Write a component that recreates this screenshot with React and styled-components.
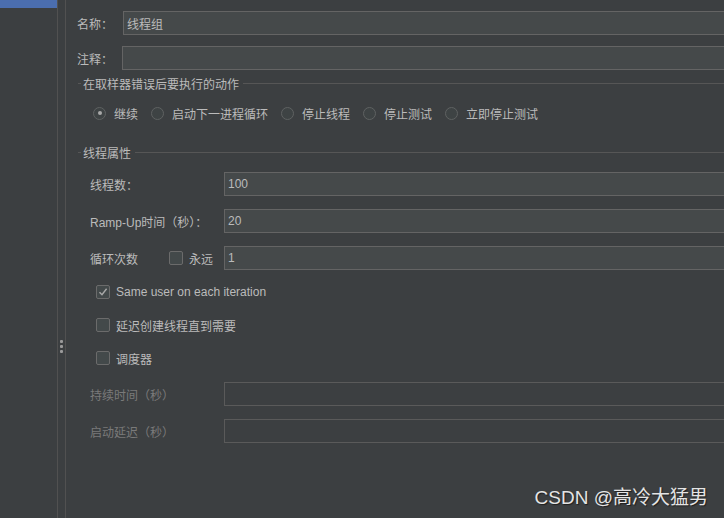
import React from "react";
import styled, { createGlobalStyle } from "styled-components";

const GlobalStyle = createGlobalStyle`
  html, body {
    margin: 0;
    padding: 0;
    background: #3c3f41;
  }
  body {
    font-family: "Liberation Sans", "Noto Sans CJK SC", sans-serif;
    font-size: 12px;
    color: #bbbbbb;
  }
`;

const Frame = styled.div`
  position: relative;
  display: flex;
  width: 724px;
  height: 518px;
  overflow: hidden;
  background: #3c3f41;
`;

const TreePane = styled.div`
  width: 57px;
  flex-shrink: 0;
  border-right: 1px solid #515151;
`;

const SelectedNode = styled.div`
  height: 8px;
  background: #4b6eaf;
`;

const Splitter = styled.div`
  width: 8px;
  flex-shrink: 0;
  border-right: 1px solid #515151;
  display: flex;
  flex-direction: column;
  align-items: center;
  justify-content: center;
  gap: 2px;
  padding-top: 174px;
  box-sizing: border-box;
`;

const Dot = styled.span`
  width: 3px;
  height: 3px;
  border-radius: 1px;
  background: #9a9a9a;
`;

const Content = styled.div`
  flex: 1;
  min-width: 0;
  padding: 11px 0 0 11px;
  display: flex;
  flex-direction: column;
`;

const Row = styled.div`
  display: flex;
  align-items: center;
  height: 24px;
  margin-top: ${(p) => p.$top || 0}px;
  padding-left: ${(p) => p.$indent || 0}px;
`;

const Label = styled.span`
  width: ${(p) => p.$w}px;
  flex-shrink: 0;
  white-space: nowrap;
  color: ${(p) => (p.$disabled ? "#7a7a7a" : "#bbbbbb")};
`;

const Field = styled.div`
  flex: 1;
  height: 24px;
  box-sizing: border-box;
  margin-right: -6px;
  border: 1px solid ${(p) => (p.$disabled ? "#5a5a5a" : "#646464")};
  background: ${(p) => (p.$disabled ? "transparent" : "#45494a")};
  color: #bbbbbb;
  padding-left: 3px;
  display: flex;
  align-items: center;
`;

const Group = styled.div`
  margin-left: 1px;
  margin-top: ${(p) => p.$top}px;
  display: flex;
  flex-direction: column;
`;

const GroupTitle = styled.div`
  display: flex;
  align-items: center;
  height: 14px;
  &::before {
    content: "";
    width: 3px;
    height: 1px;
    background: #565656;
    margin-right: 2px;
  }
  &::after {
    content: "";
    flex: 1;
    height: 1px;
    background: #565656;
    margin-left: 4px;
  }
`;

const RadioRow = styled.div`
  display: flex;
  align-items: center;
  gap: 13px;
  margin-top: 16px;
  padding-left: 15px;
  height: 14px;
`;

const RadioItem = styled.label`
  display: flex;
  align-items: center;
  gap: 8px;
  white-space: nowrap;
`;

const RadioCircle = styled.span`
  width: 13px;
  height: 13px;
  box-sizing: border-box;
  border-radius: 50%;
  border: 1px solid #5f6262;
  background: #3e4344;
  display: flex;
  align-items: center;
  justify-content: center;
  &::after {
    content: "";
    width: 4px;
    height: 4px;
    border-radius: 50%;
    background: ${(p) => (p.$on ? "#a9a9a9" : "transparent")};
  }
`;

const CheckRow = styled.label`
  display: flex;
  align-items: center;
  gap: 6px;
  height: 14px;
  margin-top: ${(p) => p.$top}px;
  padding-left: 18px;
  white-space: nowrap;
`;

const Box = styled.span`
  width: 14px;
  height: 14px;
  flex-shrink: 0;
  box-sizing: border-box;
  border: 1px solid #6b6b6b;
  border-radius: 2px;
  background: #43494a;
  display: flex;
  align-items: center;
  justify-content: center;
`;

const InlineCheck = styled.label`
  display: flex;
  align-items: center;
  gap: 6px;
  width: 55px;
  flex-shrink: 0;
`;

const Watermark = styled.div`
  position: absolute;
  right: 16px;
  bottom: 9px;
  font-family: "Liberation Sans", "Noto Sans CJK SC", sans-serif;
  font-size: 19px;
  color: #e4e4e4;
  text-shadow: 1px 1px 1px #1e1e1e;
`;

const Check = ({ on }) => (
  <Box>
    {on && (
      <svg width="10" height="10" viewBox="0 0 10 10">
        <path d="M1.5 5.2 L4 7.8 L8.6 1.8" fill="none" stroke="#a9a9a9" strokeWidth="1.4" />
      </svg>
    )}
  </Box>
);

const actions = ["继续", "启动下一进程循环", "停止线程", "停止测试", "立即停止测试"];

export default function App() {
  return (
    <>
      <GlobalStyle />
      <Frame>
        <TreePane>
          <SelectedNode />
        </TreePane>
        <Splitter>
          <Dot />
          <Dot />
          <Dot />
        </Splitter>
        <Content>
          <Row>
            <Label $w={46}>名称：</Label>
            <Field>线程组</Field>
          </Row>
          <Row $top={11}>
            <Label $w={45}>注释：</Label>
            <Field />
          </Row>

          <Group $top={6}>
            <GroupTitle>在取样器错误后要执行的动作</GroupTitle>
            <RadioRow>
              {actions.map((a, i) => (
                <RadioItem key={a}>
                  <RadioCircle $on={i === 0} />
                  {a}
                </RadioItem>
              ))}
            </RadioRow>
          </Group>

          <Group $top={25}>
            <GroupTitle>线程属性</GroupTitle>
            <Row $top={13} $indent={12}>
              <Label $w={134}>线程数：</Label>
              <Field>100</Field>
            </Row>
            <Row $top={13} $indent={12}>
              <Label $w={134}>Ramp-Up时间（秒）：</Label>
              <Field>20</Field>
            </Row>
            <Row $top={13} $indent={12}>
              <Label $w={79}>循环次数</Label>
              <InlineCheck>
                <Check />
                永远
              </InlineCheck>
              <Field>1</Field>
            </Row>
            <CheckRow $top={15}>
              <Check on />
              Same user on each iteration
            </CheckRow>
            <CheckRow $top={19}>
              <Check />
              延迟创建线程直到需要
            </CheckRow>
            <CheckRow $top={19}>
              <Check />
              调度器
            </CheckRow>
            <Row $top={17} $indent={12}>
              <Label $w={134} $disabled>持续时间（秒）</Label>
              <Field $disabled />
            </Row>
            <Row $top={13} $indent={12}>
              <Label $w={134} $disabled>启动延迟（秒）</Label>
              <Field $disabled />
            </Row>
          </Group>
        </Content>
        <Watermark>CSDN @高冷大猛男</Watermark>
      </Frame>
    </>
  );
}
